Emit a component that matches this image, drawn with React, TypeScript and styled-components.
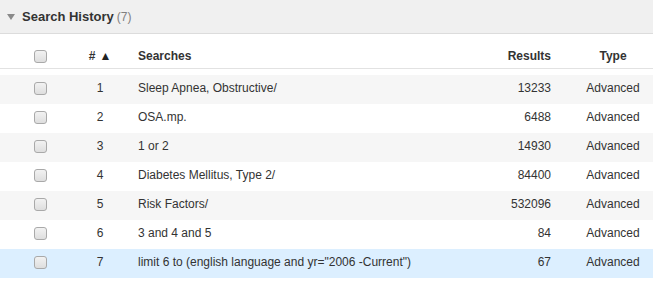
import React from 'react';
import styled, { createGlobalStyle } from 'styled-components';

const GlobalStyle = createGlobalStyle`
  html, body {
    margin: 0;
    padding: 0;
    background: #ffffff;
  }
  body {
    font-family: "Liberation Sans", Arial, sans-serif;
    color: #333333;
  }
`;

const Panel = styled.div`
  width: 653px;
  height: 292px;
  background: #ffffff;
  overflow: hidden;
`;

const TitleBar = styled.div`
  height: 33px;
  display: flex;
  align-items: center;
  background: #f0f0f0;
  border-bottom: 1px solid #dcdcdc;
  padding-left: 7px;
  box-sizing: content-box;
`;

const Caret = styled.span`
  width: 0;
  height: 0;
  border-left: 4.5px solid transparent;
  border-right: 4.5px solid transparent;
  border-top: 6px solid #8a8a8a;
  margin-right: 7px;
  margin-top: 1px;
`;

const Title = styled.span`
  font-size: 13px;
  font-weight: 700;
  color: #333333;
`;

const Count = styled.span`
  font-size: 12px;
  font-weight: 400;
  color: #808080;
  margin-left: 3px;
`;

const columns = '80px 40px 1fr 80px 80px';

const HeadRow = styled.div`
  display: grid;
  grid-template-columns: ${columns};
  height: 35px;
  align-items: end;
  padding-bottom: 5px;
  box-sizing: border-box;
  border-bottom: 1px solid #e2e2e2;
  font-size: 12px;
  font-weight: 700;
  color: #333333;
`;

const Body = styled.div`
  padding-top: 6px;
`;

const Row = styled.div<{ $striped?: boolean; $active?: boolean }>`
  display: grid;
  grid-template-columns: ${columns};
  height: 29px;
  padding-bottom: 4px;
  box-sizing: border-box;
  align-items: center;
  font-size: 12px;
  color: #333333;
  background: ${p => (p.$active ? '#dcefff' : p.$striped ? '#f6f6f6' : '#ffffff')};
`;

const Cell = styled.div<{ $align?: 'left' | 'center' | 'right'; $pad?: number }>`
  padding-left: ${p => (p.$align === 'left' || !p.$align ? p.$pad ?? 0 : 0)}px;
  padding-right: ${p => (p.$align === 'right' ? p.$pad ?? 0 : 0)}px;
  white-space: nowrap;
  display: flex;
  justify-content: ${p => (p.$align === 'center' ? 'center' : p.$align === 'right' ? 'flex-end' : 'flex-start')};
  align-items: center;
`;

const Check = styled.span<{ $drop?: number }>`
  display: inline-block;
  width: 11px;
  height: 11px;
  border: 1px solid #a9a9a9;
  border-radius: 3px;
  background: linear-gradient(#f2f2f2, #dedede);
  margin-top: ${p => p.$drop ?? 0}px;
`;

const SortArrow = styled.span`
  font-size: 12px;
  margin-left: 4px;
  color: #222222;
`;

type Entry = { id: number; search: string; results: number; type: string };

const entries: Entry[] = [
  { id: 1, search: 'Sleep Apnea, Obstructive/', results: 13233, type: 'Advanced' },
  { id: 2, search: 'OSA.mp.', results: 6488, type: 'Advanced' },
  { id: 3, search: '1 or 2', results: 14930, type: 'Advanced' },
  { id: 4, search: 'Diabetes Mellitus, Type 2/', results: 84400, type: 'Advanced' },
  { id: 5, search: 'Risk Factors/', results: 532096, type: 'Advanced' },
  { id: 6, search: '3 and 4 and 5', results: 84, type: 'Advanced' },
  { id: 7, search: 'limit 6 to (english language and yr="2006 -Current")', results: 67, type: 'Advanced' },
];

const App: React.FC = () => {
  return (
    <Panel>
      <GlobalStyle />
      <TitleBar>
        <Caret />
        <Title>Search History</Title>
        <Count>(7)</Count>
      </TitleBar>

      <HeadRow>
        <Cell $align="center"><Check $drop={-3} /></Cell>
        <Cell $align="center">#<SortArrow>▲</SortArrow></Cell>
        <Cell $pad={18}>Searches</Cell>
        <Cell $align="right" $pad={22}>Results</Cell>
        <Cell $align="center">Type</Cell>
      </HeadRow>

      <Body>
        {entries.map((e, i) => (
          <Row key={e.id} $striped={i % 2 === 0} $active={e.id === 7}>
            <Cell $align="center"><Check $drop={2} /></Cell>
            <Cell $align="center">{e.id}</Cell>
            <Cell $pad={18}>{e.search}</Cell>
            <Cell $align="right" $pad={22}>{e.results}</Cell>
            <Cell $align="center">{e.type}</Cell>
          </Row>
        ))}
      </Body>
    </Panel>
  );
};

export default App;
